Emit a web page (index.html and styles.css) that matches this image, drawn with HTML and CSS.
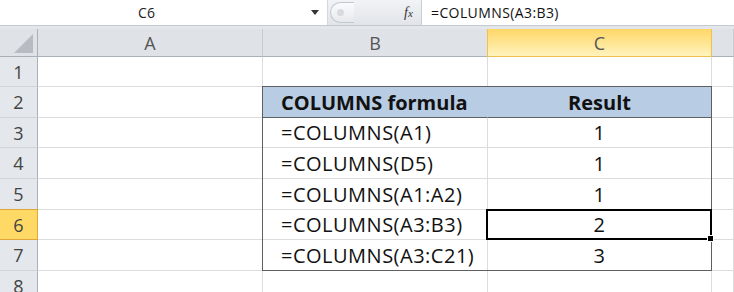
FILE: index.html
```html
<!DOCTYPE html>
<html lang="en">
<head>
  <meta charset="UTF-8" />
  <title>COLUMNS formula</title>
  <link rel="stylesheet" href="styles.css">
</head>
<body>

  <div class="formula-bar">
    <div class="name-box">
      <span class="name">C6</span>
      <svg class="arrow" width="8" height="5" viewBox="0 0 8 5"><path d="M0 0H8L4 5Z" fill="#333"/></svg>
    </div>
    <div class="bar-tools">
      <div class="pill"><span class="pill-dot"></span></div>
      <span class="fx"><i>f</i><i class="x">x</i></span>
    </div>
    <div class="formula-input">=COLUMNS(A3:B3)</div>
  </div>
  <div class="bar-gap"></div>

  <div class="sheet-wrap">
    <div class="sheet">
      <div class="corner"><span class="corner-tri"></span></div>
      <div class="col-head">A</div>
      <div class="col-head">B</div>
      <div class="col-head active">C</div>
      <div class="col-head"></div>

      <div class="row-head">1</div>
      <div class="cell"></div><div class="cell"></div><div class="cell"></div><div class="cell"></div>

      <div class="row-head">2</div>
      <div class="cell"></div>
      <div class="cell head">COLUMNS formula</div>
      <div class="cell head center">Result</div>
      <div class="cell"></div>

      <div class="row-head">3</div>
      <div class="cell"></div>
      <div class="cell text">=COLUMNS(A1)</div>
      <div class="cell center">1</div>
      <div class="cell"></div>

      <div class="row-head">4</div>
      <div class="cell"></div>
      <div class="cell text">=COLUMNS(D5)</div>
      <div class="cell center">1</div>
      <div class="cell"></div>

      <div class="row-head">5</div>
      <div class="cell"></div>
      <div class="cell text">=COLUMNS(A1:A2)</div>
      <div class="cell center">1</div>
      <div class="cell"></div>

      <div class="row-head active">6</div>
      <div class="cell"></div>
      <div class="cell text">=COLUMNS(A3:B3)</div>
      <div class="cell center">2</div>
      <div class="cell"></div>

      <div class="row-head">7</div>
      <div class="cell"></div>
      <div class="cell text">=COLUMNS(A3:C21)</div>
      <div class="cell center">3</div>
      <div class="cell"></div>

      <div class="row-head">8</div>
      <div class="cell"></div><div class="cell"></div><div class="cell"></div><div class="cell"></div>
    </div>

    <div class="sheet overlay">
      <div class="table-frame"></div>
      <div class="selection"><span class="fill-handle"></span></div>
    </div>
  </div>

</body>
</html>
```

FILE: styles.css
```css
body {
  margin: 0;
  background-color: #ffffff;
  font-family: "Open Sans", "Liberation Sans", sans-serif;
  overflow: hidden;
}
.formula-bar {
  display: flex;
  height: 25px;
  background-color: #e8ebef;
  border-bottom: 1px solid #c5cad1;
}
.name-box {
  width: 327px;
  display: flex;
  align-items: center;
  background-color: #ffffff;
  border-right: 1px solid #d5d9de;
}
.name {
  flex: 1;
  text-align: center;
  font-size: 14px;
  color: #222;
  padding-right: 18px;
}
.arrow {
  margin-right: 8px;
}
.bar-tools {
  width: 93px;
  display: flex;
  align-items: center;
  background: linear-gradient(#f1f3f5, #e1e5ea);
}
.pill {
  width: 24px;
  height: 21px;
  margin-left: 2px;
  border: 1px solid #c2c7ce;
  border-right: none;
  border-radius: 11px 0 0 11px;
  background: linear-gradient(#fbfbfc, #e6e9ed);
  display: flex;
  align-items: center;
  padding-left: 6px;
  box-sizing: border-box;
}
.pill-dot {
  width: 7px;
  height: 7px;
  border-radius: 50%;
  background-color: #d7dbe0;
}
.fx {
  margin-left: 50px;
  font-family: "Liberation Serif", serif;
  font-size: 14px;
  color: #333;
}
.fx .x {
  font-size: 11px;
}
.formula-input {
  flex: 1;
  background-color: #ffffff;
  border-left: 1px solid #c9ced4;
  font-size: 14px;
  letter-spacing: 0.4px;
  color: #111;
  display: flex;
  align-items: center;
  padding-left: 9px;
}
.bar-gap {
  height: 3px;
  background-color: #e3e6ea;
}
.sheet-wrap {
  display: grid;
}
.sheet {
  grid-area: 1 / 1;
  display: grid;
  grid-template-columns: 38px 225px 225px 224px 1fr;
  grid-template-rows: 28px 30px 31px 30px 31px 31px 30px 31px 30px;
  background-color: #ffffff;
}
.sheet.overlay {
  background: none;
  pointer-events: none;
}
.corner {
  background-color: #dfe3e8;
  border-right: 1px solid #a9b0b8;
  border-bottom: 1px solid #a9b0b8;
  position: relative;
}
.corner-tri {
  position: absolute;
  right: 4px;
  bottom: 3px;
  width: 0;
  height: 0;
  border-left: 19px solid transparent;
  border-bottom: 19px solid #b7bcc2;
}
.col-head {
  background-color: #dfe3e8;
  border-right: 1px solid #c7ccd2;
  border-bottom: 1px solid #a9b0b8;
  color: #555;
  font-size: 18px;
  display: flex;
  align-items: center;
  justify-content: center;
}
.col-head.active {
  background: linear-gradient(#ffd768, #fff3bd);
  border-left: 1px solid #f0c050;
  border-right: 1px solid #f0c050;
  border-bottom: 1px solid #f0c050;
  margin-left: -1px;
}
.row-head {
  background-color: #e4e7eb;
  border-right: 1px solid #a9b0b8;
  border-bottom: 1px solid #d2d6db;
  color: #444;
  font-size: 18px;
  display: flex;
  align-items: center;
  justify-content: center;
}
.row-head.active {
  background-color: #ffd966;
  border-right: 1px solid #e2a53a;
  border-top: 1px solid #e2a53a;
  border-bottom: 1px solid #e2a53a;
  margin-top: -1px;
}
.cell {
  border-right: 1px solid #dadcdd;
  border-bottom: 1px solid #dadcdd;
  color: #111;
  font-size: 20px;
  letter-spacing: 0.5px;
  display: flex;
  align-items: center;
}
.cell.text {
  padding-left: 18px;
}
.cell.center {
  justify-content: center;
}
.cell.head {
  background-color: #b8cce4;
  font-weight: bold;
  letter-spacing: 0;
  padding-left: 18px;
  border-right-color: #b8cce4;
  border-bottom-color: #5f5f5f;
}
.cell.head.center {
  padding-left: 0;
}
.table-frame {
  grid-column: 3 / 5;
  grid-row: 3 / 9;
  margin: -1px 0 0 -1px;
  border: 1px solid #5f5f5f;
}
.selection {
  grid-column: 4 / 5;
  grid-row: 7 / 8;
  margin: -1px 0 0 -2px;
  border: 2px solid #000;
  position: relative;
}
.fill-handle {
  position: absolute;
  right: -4px;
  bottom: -4px;
  width: 5px;
  height: 5px;
  background-color: #000;
  border: 1px solid #fff;
}
```
